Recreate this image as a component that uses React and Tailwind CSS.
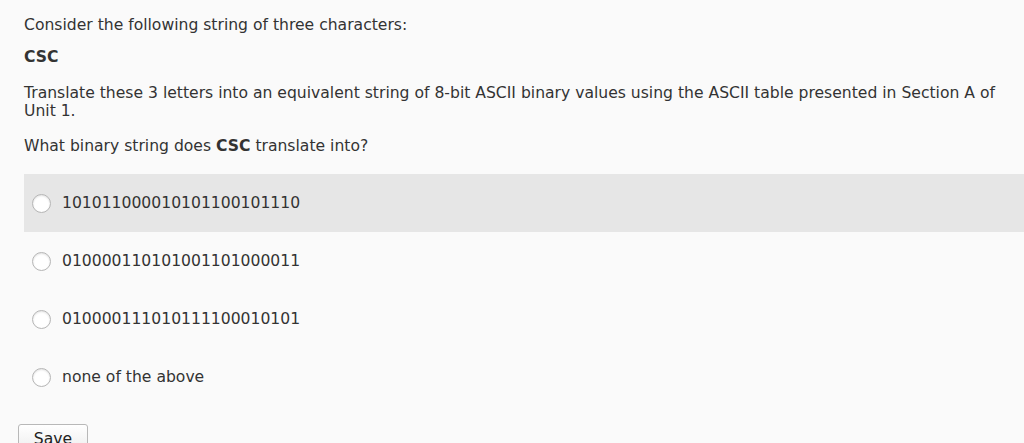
import React from "react";

const options = [
  "101011000010101100101110",
  "010000110101001101000011",
  "010000111010111100010101",
  "none of the above",
];

const Radio = () => (
  <span className="inline-block h-[19px] w-[19px] shrink-0 rounded-full border border-[#b5b5b5] bg-white shadow-[inset_0_1px_2px_rgba(0,0,0,0.12)]" />
);

export default function App() {
  return (
    <div
      className="min-h-[443px] overflow-hidden bg-[#fafafa] text-[15.6px] leading-[18px] text-[#333]"
      style={{ fontFamily: '"DejaVu Sans", Verdana, sans-serif' }}
    >
      <div className="pl-[24px] pr-[8px] pt-[16px]">
        <p>Consider the following string of three characters:</p>
        <p className="mt-[14px] font-bold">CSC</p>
        <p className="mt-[18px]">
          Translate these 3 letters into an equivalent string of 8-bit ASCII binary values using the ASCII table presented in Section A of Unit 1.
        </p>
        <p className="mt-[17px]">
          What binary string does <b>CSC</b> translate into?
        </p>
      </div>

      <div className="mt-[19px] pl-[24px]">
        {options.map((opt, i) => (
          <div
            key={i}
            className={
              "flex h-[58px] items-center gap-[11px] pl-[8px] " +
              (i === 0 ? "bg-[#e6e6e6]" : "")
            }
          >
            <Radio />
            <span>{opt}</span>
          </div>
        ))}
      </div>

      <div className="pl-[18px] pt-[18px]">
        <button className="h-[30px] w-[70px] rounded-[3px] border border-[#b8b8b8] bg-gradient-to-b from-white to-[#ececec] text-[15.6px] text-[#222]">
          Save
        </button>
      </div>
    </div>
  );
}
